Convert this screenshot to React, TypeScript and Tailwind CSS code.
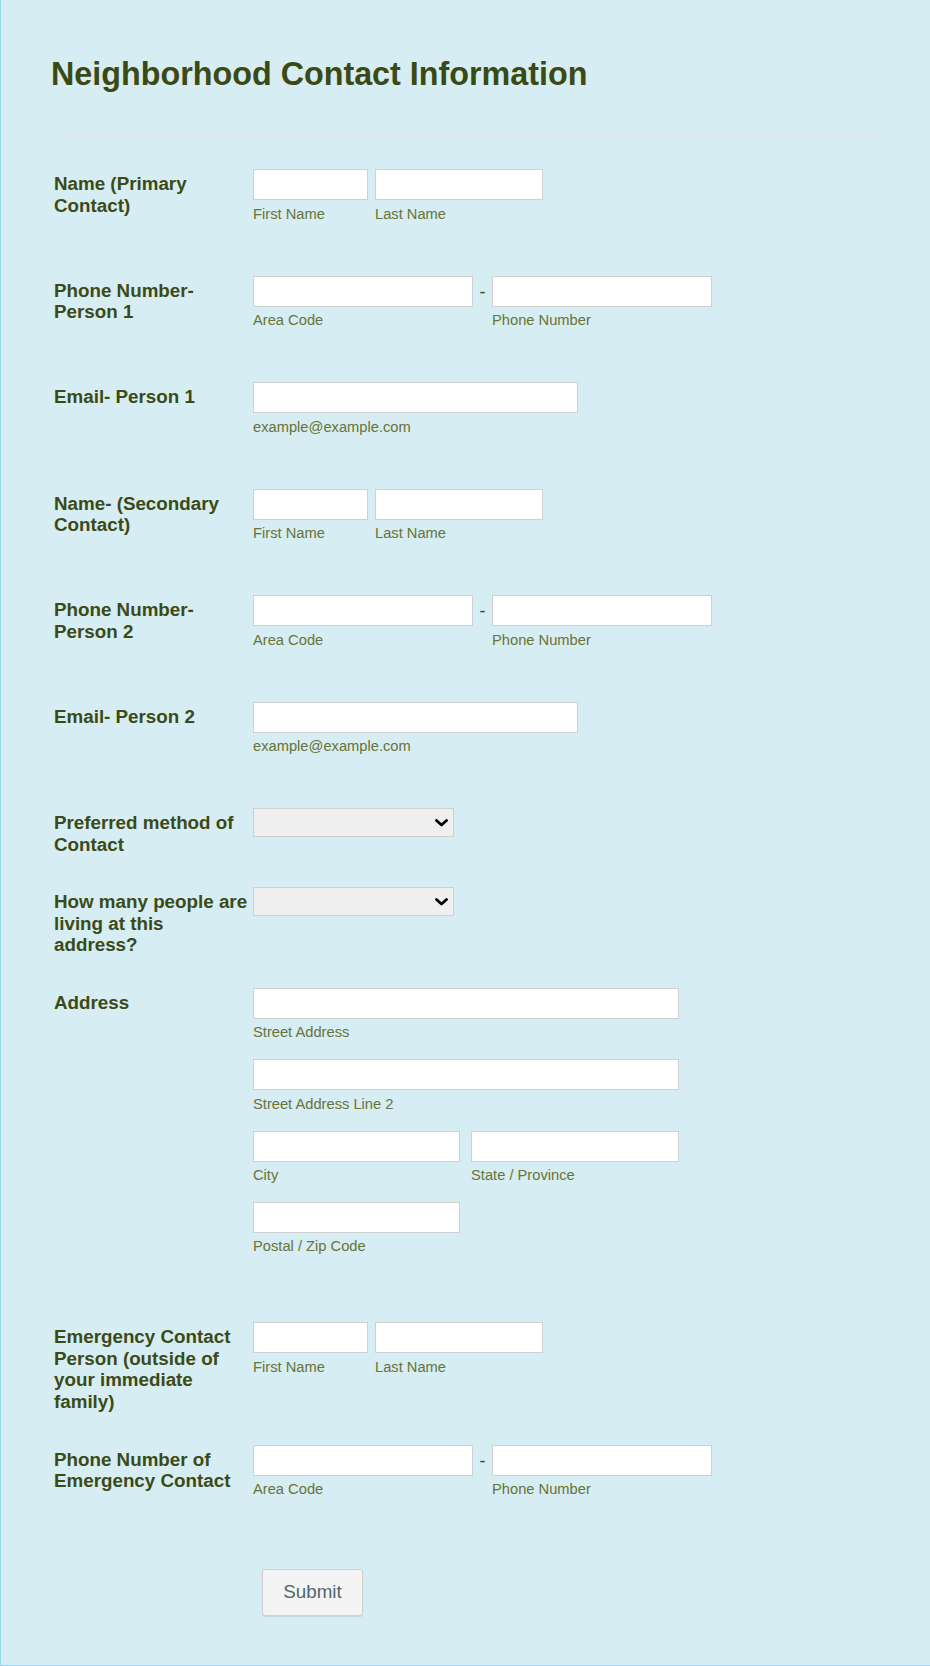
import React from "react";

function Label({ children }: { children: React.ReactNode }) {
  return (
    <div className="mb-[-4px] w-[199px] shrink-0 pr-[3px] pt-[4px] text-[18.8px] font-bold leading-[21.6px] text-[#3c4a16]">
      {children}
    </div>
  );
}

function Field({ cls, sub, area = "h-[39.5px]" }: { cls: string; sub?: string; area?: string }) {
  return (
    <div className={cls}>
      <input
        type="text"
        className="block h-[31px] w-full border border-[#d0d0d0] bg-white outline-none"
      />
      <div className={area}>
        {sub && (
          <div className="pt-[5.5px] text-[14.7px] leading-[17px] text-[#6b7336]">{sub}</div>
        )}
      </div>
    </div>
  );
}

function NameRow({ label }: { label: React.ReactNode }) {
  return (
    <div className="flex py-[18px]">
      <Label>{label}</Label>
      <div className="flex gap-[7px]">
        <Field cls="w-[115px]" sub="First Name" />
        <Field cls="w-[168px]" sub="Last Name" />
      </div>
    </div>
  );
}

function PhoneRow({ label }: { label: React.ReactNode }) {
  return (
    <div className="flex py-[18px]">
      <Label>{label}</Label>
      <div className="flex">
        <Field cls="w-[220px]" sub="Area Code" />
        <div className="w-[19px] pt-[6px] text-center text-[18px] leading-[21px] text-[#3c4a16]">-</div>
        <Field cls="w-[220px]" sub="Phone Number" />
      </div>
    </div>
  );
}

function EmailRow({ label }: { label: React.ReactNode }) {
  return (
    <div className="flex py-[18px]">
      <Label>{label}</Label>
      <Field cls="w-[325px]" sub="example@example.com" />
    </div>
  );
}

function SelectBox() {
  return (
    <div className="flex h-[29px] w-[201px] items-center justify-end border border-[#d0d0d0] bg-[#efefef] pr-[5px]">
      <svg width="13" height="8" viewBox="0 0 13 8" fill="none">
        <path d="M1.5 1.5 L6.5 6 L11.5 1.5" stroke="#000" strokeWidth="2.8" strokeLinecap="round" strokeLinejoin="round" />
      </svg>
    </div>
  );
}

function SelectRow({ label }: { label: React.ReactNode }) {
  return (
    <div className="flex py-[18px]">
      <Label>{label}</Label>
      <SelectBox />
    </div>
  );
}

export default function App() {
  return (
    <div className="min-h-[1666px] w-full border-b border-l border-[#92d8ee] bg-[#d5edf3] font-['Liberation_Sans',Arial,sans-serif]">
      <div className="pl-[50px] pt-[55px]">
        <h1 className="text-[32.3px] font-bold leading-[38px] text-[#3b4a14]">
          Neighborhood Contact Information
        </h1>
      </div>
      <div className="ml-[53px] mt-[41px] h-px w-[828px] bg-[#dfe7ea]" />
      <div className="pl-[53px] pt-[16px]">
        <NameRow label="Name (Primary Contact)" />
        <PhoneRow label="Phone Number- Person 1" />
        <EmailRow label="Email- Person 1" />
        <NameRow label="Name- (Secondary Contact)" />
        <PhoneRow label="Phone Number- Person 2" />
        <EmailRow label="Email- Person 2" />
        <SelectRow label="Preferred method of Contact" />
        <SelectRow label="How many people are living at this address?" />
        <div className="flex pb-[31px] pt-[18px]">
          <Label>Address</Label>
          <div className="flex flex-col">
            <Field cls="w-[426px]" sub="Street Address" area="h-[40.3px]" />
            <Field cls="w-[426px]" sub="Street Address Line 2" area="h-[40.3px]" />
            <div className="flex gap-[11px]">
              <Field cls="w-[207px]" sub="City" area="h-[40.3px]" />
              <Field cls="w-[208px]" sub="State / Province" area="h-[40.3px]" />
            </div>
            <Field cls="w-[207px]" sub="Postal / Zip Code" area="h-[40.3px]" />
          </div>
        </div>
        <NameRow label="Emergency Contact Person (outside of your immediate family)" />
        <PhoneRow label="Phone Number of Emergency Contact" />
        <div className="pt-[35.6px]">
          <button className="ml-[208px] h-[47px] w-[101px] rounded-[3px] border border-[#cfcfcf] bg-[#f4f4f4] text-[18.8px] text-[#4f6670] shadow-[0_1px_1px_rgba(0,0,0,0.08)]">
            Submit
          </button>
        </div>
      </div>
    </div>
  );
}
